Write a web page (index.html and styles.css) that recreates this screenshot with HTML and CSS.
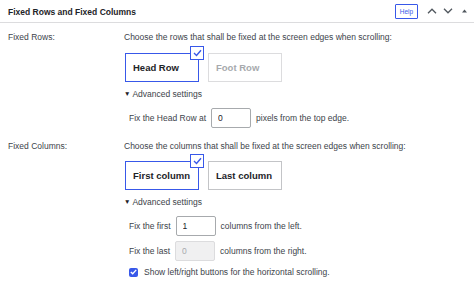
FILE: index.html
```html
<!DOCTYPE html>
<html lang="en">
<head>
  <meta charset="UTF-8" />
  <title>Fixed Rows and Fixed Columns</title>
  <link rel="stylesheet" href="styles.css">
</head>
<body>
  <div class="postbox">
    <div class="postbox-header">
      <h2>Fixed Rows and Fixed Columns</h2>
      <div class="handle-actions">
        <button class="help-btn">Help</button>
        <span class="icon-btn">
          <svg width="10" height="6" viewBox="0 0 10 6"><path d="M1 5.2 L5 1.2 L9 5.2" fill="none" stroke="#50575e" stroke-width="1.3"/></svg>
        </span>
        <span class="icon-btn">
          <svg width="10" height="6" viewBox="0 0 10 6"><path d="M1 0.8 L5 4.8 L9 0.8" fill="none" stroke="#50575e" stroke-width="1.3"/></svg>
        </span>
        <span class="icon-btn">
          <svg width="5" height="4" viewBox="0 0 5 4"><path d="M0 3.5 L2.5 0.5 L5 3.5 Z" fill="#50575e"/></svg>
        </span>
      </div>
    </div>

    <div class="inside">
      <div class="setting">
        <div class="setting-label">Fixed Rows:</div>
        <div class="setting-content">
          <p class="desc">Choose the rows that shall be fixed at the screen edges when scrolling:</p>
          <div class="choices">
            <div class="choice selected">
              Head Row
              <span class="badge">
                <svg width="9" height="8" viewBox="0 0 9 8"><path d="M1 4 L3.5 6.4 L8 1.2" fill="none" stroke="#3858e9" stroke-width="1.4"/></svg>
              </span>
            </div>
            <div class="choice disabled">Foot Row</div>
          </div>
          <div class="advanced"><span class="arrow">▼</span>Advanced settings</div>
          <div class="adv-line">
            <span>Fix the Head Row at</span>
            <input type="text" value="0" />
            <span>pixels from the top edge.</span>
          </div>
        </div>
      </div>

      <div class="setting">
        <div class="setting-label">Fixed Columns:</div>
        <div class="setting-content">
          <p class="desc">Choose the columns that shall be fixed at the screen edges when scrolling:</p>
          <div class="choices">
            <div class="choice selected">
              First column
              <span class="badge">
                <svg width="9" height="8" viewBox="0 0 9 8"><path d="M1 4 L3.5 6.4 L8 1.2" fill="none" stroke="#3858e9" stroke-width="1.4"/></svg>
              </span>
            </div>
            <div class="choice">Last column</div>
          </div>
          <div class="advanced"><span class="arrow">▼</span>Advanced settings</div>
          <div class="adv-line">
            <span>Fix the first</span>
            <input type="text" value="1" />
            <span>columns from the left.</span>
          </div>
          <div class="adv-line tight">
            <span>Fix the last</span>
            <input type="text" value="0" disabled />
            <span>columns from the right.</span>
          </div>
          <div class="adv-line check-line">
            <span class="checkbox">
              <svg width="7" height="6" viewBox="0 0 7 6"><path d="M0.8 3 L2.7 4.8 L6.2 0.9" fill="none" stroke="#fff" stroke-width="1.3"/></svg>
            </span>
            <span>Show left/right buttons for the horizontal scrolling.</span>
          </div>
        </div>
      </div>
    </div>
  </div>
</body>
</html>
```

FILE: styles.css
```css
body {
  margin: 0;
  font-family: "Liberation Sans", Arial, sans-serif;
  font-size: 8.5px;
  color: #3c434a;
  background-color: #fff;
}
.postbox {
  background-color: #fff;
  height: 288px;
}
.postbox-header {
  display: flex;
  align-items: center;
  justify-content: space-between;
  height: 22px;
  padding: 0 2px 0 8px;
  border-bottom: 1px solid #dcdcde;
}
.postbox-header h2 {
  margin: 0;
  padding-top: 1px;
  font-size: 8.5px;
  font-weight: bold;
  color: #1d2327;
}
.handle-actions {
  display: flex;
  align-items: center;
}
.help-btn {
  width: 23px;
  height: 15px;
  padding: 0;
  margin-right: 6px;
  border: 1px solid #3858e9;
  border-radius: 1px;
  background-color: #fff;
  color: #3858e9;
  font-family: "Liberation Sans", Arial, sans-serif;
  font-size: 6.5px;
}
.icon-btn {
  width: 16px;
  height: 16px;
  display: flex;
  align-items: center;
  justify-content: center;
}
.inside {
  padding-top: 8px;
}
.setting {
  display: flex;
  margin-bottom: 12px;
}
.setting-label {
  width: 124px;
  padding-left: 8px;
  box-sizing: border-box;
  line-height: 12px;
  flex-shrink: 0;
}
.setting-content {
  flex: 1;
}
.desc {
  margin: 0;
  line-height: 12px;
}
.choices {
  display: flex;
  gap: 9px;
  margin-top: 9.5px;
  padding-left: 1px;
}
.choice {
  position: relative;
  width: 74px;
  height: 29px;
  box-sizing: border-box;
  display: flex;
  align-items: center;
  padding-left: 7px;
  border: 1px solid #c3c4c7;
  font-size: 9.5px;
  font-weight: bold;
  color: #1d2327;
}
.choice.selected {
  border: 1.5px solid #3858e9;
}
.choice.disabled {
  border-color: #dcdcde;
  color: #a7aaad;
  font-weight: 600;
}
.badge {
  position: absolute;
  top: -8px;
  right: -6px;
  width: 14px;
  height: 14px;
  box-sizing: border-box;
  border: 1.5px solid #3858e9;
  background-color: #fff;
  display: flex;
  align-items: center;
  justify-content: center;
}
.advanced {
  margin-top: 6px;
  line-height: 12px;
  color: #3c434a;
}
.arrow {
  font-size: 6.5px;
  margin-right: 2px;
  position: relative;
  top: -1px;
  color: #1d2327;
}
.adv-line {
  display: flex;
  align-items: center;
  gap: 5px;
  margin-top: 7px;
  padding-left: 5px;
}
.adv-line.tight {
  margin-top: 5px;
}
.adv-line input {
  width: 40px;
  height: 20px;
  box-sizing: border-box;
  padding: 0 6px;
  border: 1px solid #a7aaad;
  border-radius: 2px;
  font-family: "Liberation Sans", Arial, sans-serif;
  font-size: 8.5px;
  color: #1d2327;
  background-color: #fff;
}
.adv-line input:disabled {
  background-color: #f0f0f1;
  border-color: #dcdcde;
  color: #a7aaad;
}
.check-line {
  margin-top: 6px;
  gap: 6px;
}
.checkbox {
  width: 9px;
  height: 9px;
  border-radius: 2px;
  background-color: #3858e9;
  display: flex;
  align-items: center;
  justify-content: center;
}
```
